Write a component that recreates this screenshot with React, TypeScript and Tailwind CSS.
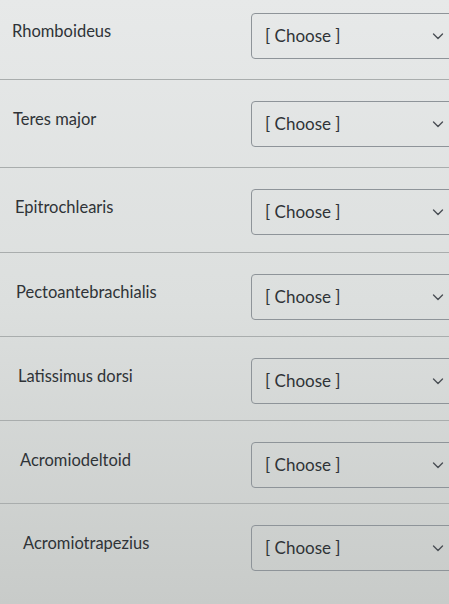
import React from 'react';

// photo drifts a little: rows get shorter and labels move right further down
const muscles = [
  { name: 'Rhomboideus', row: 'h-[88px]', label: 'pl-[7px]' },
  { name: 'Teres major', row: 'h-[88px]', label: 'pl-[8px]' },
  { name: 'Epitrochlearis', row: 'h-[85px]', label: 'pl-[10px]' },
  { name: 'Pectoantebrachialis', row: 'h-[84px]', label: 'pl-[11px]' },
  { name: 'Latissimus dorsi', row: 'h-[84px]', label: 'pl-[13px]' },
  { name: 'Acromiodeltoid', row: 'h-[83px]', label: 'pl-[15px]' },
  { name: 'Acromiotrapezius', row: 'h-[83px]', label: 'pl-[18px]' },
];

const Chevron = () => (
  <svg width="14" height="14" viewBox="0 0 14 14" fill="none" className="text-[#4a4f55]">
    <path d="M2.5 5l4.5 4.5L11.5 5" stroke="currentColor" strokeWidth="1.4" strokeLinecap="round" strokeLinejoin="round" />
  </svg>
);

export default function App() {
  return (
    <div
      className="w-[449px] h-[604px] overflow-hidden bg-gradient-to-b from-[#e7e9e9] via-[#dcdfde] to-[#c8cbc9] text-[#2f3337]"
      style={{ fontFamily: 'Lato, "Open Sans", sans-serif' }}
    >
      <div className="-mt-2">
        {muscles.map((m) => (
          <div key={m.name} className={`flex items-start pl-[5px] border-b border-[#a9adad] last:border-b-0 ${m.row}`}>
            <div className={`flex-1 pt-[27px] text-[16.5px] ${m.label}`}>{m.name}</div>
            <div className="pt-[21px] shrink-0">
              <div className="w-[212px] h-[46px] border border-[#8e9499] rounded-[4px] flex items-center justify-between pl-[13px] pr-[17px] text-[17px] -mr-[14px]">
                <span>[ Choose ]</span>
                <Chevron />
              </div>
            </div>
          </div>
        ))}
      </div>
    </div>
  );
}
